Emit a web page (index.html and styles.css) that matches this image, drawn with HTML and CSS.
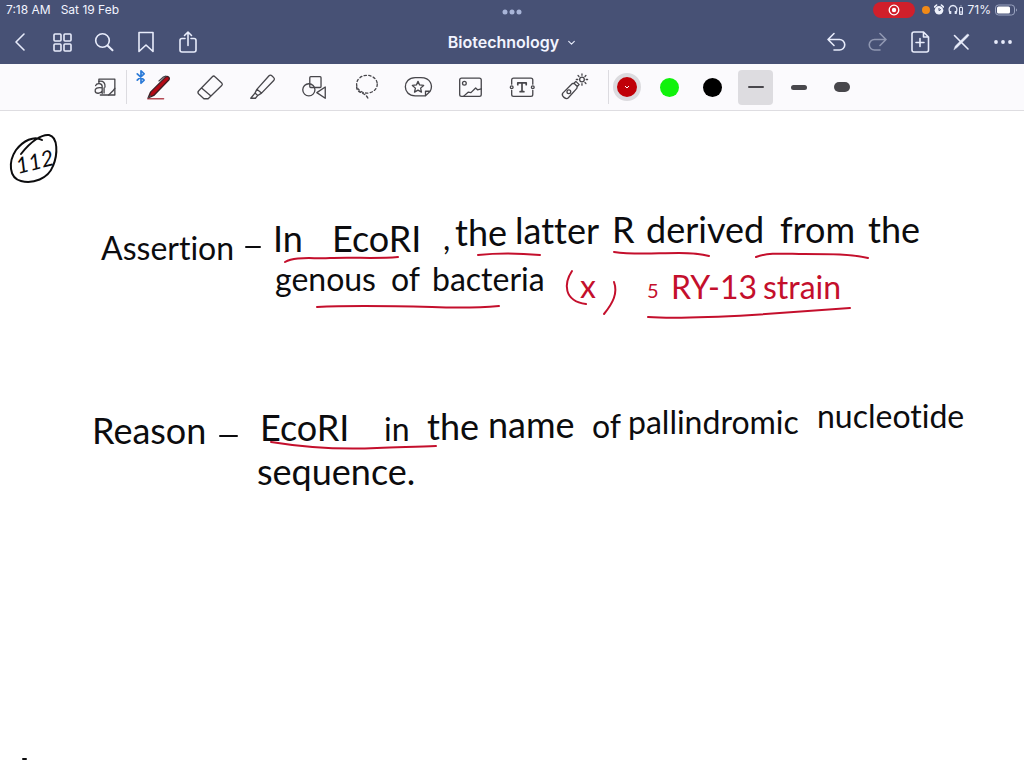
FILE: index.html
```
<!DOCTYPE html>
<html lang="en">

<head>
    <meta charset="UTF-8" />
    <meta name="viewport" content="width=device-width, initial-scale=1" />
    <title>Biotechnology</title>
    <link rel="stylesheet" href="styles.css">
</head>

<body>
    <header class="top">
        <div class="status">
            <div class="status-left">
                <span>7:18 AM</span>
                <span>Sat 19 Feb</span>
            </div>
            <svg class="multitask" width="22" height="6"><circle cx="4" cy="3" r="2.5"/><circle cx="11" cy="3" r="2.5"/><circle cx="18" cy="3" r="2.5"/></svg>
            <div class="status-right">
                <span class="record">
                    <svg width="12" height="12" viewBox="0 0 12 12"><circle cx="6" cy="6" r="4.8" fill="none" stroke="#fff" stroke-width="1.3"/><circle cx="6" cy="6" r="2.2" fill="#fff"/></svg>
                </span>
                <span class="mic-dot"></span>
                <svg width="10" height="12" viewBox="0 0 10 12"><circle cx="5" cy="6.3" r="4.3" fill="#eef1fb"/><path d="M.5 3 2.6 1M9.500 3 7.400 1" stroke="#eef1fb" stroke-width="1.6" stroke-linecap="round"/><path d="M5 4v2.600l2-1.200" fill="none" stroke="#475175"/></svg>
                <svg width="16" height="12" viewBox="0 0 16 12" fill="none" stroke="#e3e8f8"><path d="M2.500 9.500C-.5 5 2 1.500 5 1.500s5.500 3.500 2.500 8" stroke-width="1.300"/><path d="M2.300 7v3M7.700 7v3" stroke-width="2"/><path d="M11.500 3.500h3v7h-3zM12.500 2h1M13 7v3" stroke-width="1"/></svg>
                <span>71%</span>
                <svg width="23" height="12" viewBox="0 0 23 12"><rect x=".5" y="1" width="19" height="10" rx="3" fill="none" stroke="#9aa3c0"/><rect x="2" y="2.500" width="13" height="7" rx="1.500" fill="#fff"/><path d="M21 4.500c1.300.5 1.300 2.500 0 3z" fill="#9aa3c0"/></svg>
            </div>
        </div>
        <nav class="nav">
            <div class="nav-group">
                <button aria-label="Back"><svg viewBox="0 0 24 24"><path d="m15 4-8 8 8 8"/></svg></button>
                <button aria-label="Thumbnails"><svg viewBox="0 0 24 24"><rect x="3" y="4" width="7" height="7" rx="1"/><rect x="13" y="4" width="7" height="7" rx="1"/><rect x="3" y="14" width="7" height="7" rx="1"/><rect x="13" y="14" width="7" height="7" rx="1"/></svg></button>
                <button aria-label="Search"><svg viewBox="0 0 24 24"><circle cx="9.500" cy="10.500" r="6.800"/><path d="m14.500 15.500 5 4.800" stroke-width="2"/></svg></button>
                <button aria-label="Bookmark"><svg viewBox="0 0 24 24"><path d="M4 2.500h14v19l-7-6.500-7 6.500z"/></svg></button>
                <button aria-label="Share"><svg viewBox="0 0 24 24"><path d="M8 8.500H5a2 2 0 0 0-2 2V20a2 2 0 0 0 2 2h12a2 2 0 0 0 2-2v-9.500a2 2 0 0 0-2-2h-3M11 15.500V2M7.500 5.500 11 2l3.500 3.500"/></svg></button>
            </div>
            <button class="doc-title">Biotechnology <svg viewBox="0 0 8 8"><path d="m1.500 3 2.500 2.500L6.500 3"/></svg></button>
            <div class="nav-group nav-end">
                <button aria-label="Undo"><svg viewBox="0 0 24 24"><path d="M11 3.500 5 9.500l6 6M5 9.500h11.500a5 5 0 0 1 0 10.500H11"/></svg></button>
                <button aria-label="Redo" class="faded"><svg viewBox="0 0 24 24"><path d="m15 3.500 6 6-6 6M21 9.500H9.500A5 5 0 0 0 9.500 20H15"/></svg></button>
                <button aria-label="Add page"><svg viewBox="0 0 24 24"><path d="M7 2h9.500L21.500 7v13a2 2 0 0 1-2 2H7a2 2 0 0 1-2-2V4a2 2 0 0 1 2-2zM16.500 2v5h5M13 8.500v8M9 12.500h8"/></svg></button>
                <button aria-label="Stop editing"><svg viewBox="0 0 24 24"><path d="m5.500 5.500 13.500 13.500"/><path d="m5 19.500 1.300-3.500L18 4.500a1 1 0 0 1 1.500 1.500L8 17.500z" fill="#e8ecfb" stroke-width=".5"/></svg></button>
                <button aria-label="More"><svg viewBox="0 0 24 24" class="solid"><circle cx="5" cy="12" r="1.900"/><circle cx="12" cy="12" r="1.900"/><circle cx="19" cy="12" r="1.900"/></svg></button>
            </div>
        </nav>
    </header>

    <div class="tools">
        <button class="tool narrow" aria-label="Zoom window"><svg viewBox="0 0 32 32"><path d="M9.500 12V7.500h17v17H11"/><path d="M6 14.500c1-3 7-3 7 1v7.500M13 17c-5-1-8 .5-7.500 3.500s6 3 7.500-.5M15 17v5.500M9.500 10c5-1 7 2 6.500 6M20 24.500c1-1 5-4 6.500-7"/></svg></button>
        <span class="divider"></span>
        <button class="tool pen" aria-label="Pen">
            <svg viewBox="0 0 32 32"><path d="M5 28.500h17" stroke="#b54a55"/><path d="M5.500 27.500 8 21.500 24 5.500c2-2 5.500.5 3.500 3L11.500 25z" fill="#b40a16" stroke="#3a1d22"/><path d="m17 9.500 4.500-4 3-1M6 27l2-1.500"/></svg>
            <svg class="bluetooth" viewBox="0 0 8 12"><path d="M1 3.500 6.500 8.500 4 11V1l2.500 2.500L1 8.500"/></svg>
        </button>
        <button class="tool" aria-label="Eraser"><svg viewBox="0 0 32 32"><path d="m4 20 14.500-15a2 2 0 0 1 2.800 0l7.200 6.700a2 2 0 0 1 0 2.800L14 28.500H9.500L4 23.500a2.500 2.500 0 0 1 0-3.500zM7 17l10 8.500"/></svg></button>
        <button class="tool" aria-label="Highlighter"><svg viewBox="0 0 32 32"><path d="M10.500 18.500 23.500 4a2 2 0 0 1 3 0l2 2a2 2 0 0 1 0 3L15.500 22.500zM10.500 18.500l-2 4 3 2.500 4-2.500M8.500 22.500l-4.500 5.500h5l2.500-3"/></svg></button>
        <button class="tool" aria-label="Shapes"><svg viewBox="0 0 32 32"><rect x="11.500" y="5" width="12" height="11.500" rx="1"/><circle cx="10.500" cy="19" r="6.500"/><path d="m19 22 9-6v12z"/></svg></button>
        <button class="tool" aria-label="Lasso"><svg viewBox="0 0 32 32"><ellipse cx="17" cy="13" rx="11" ry="9.500" stroke-dasharray="2.500 2.500"/><path d="M6 16c0 7 9 5 12 12" stroke-dasharray="2.500 2.500"/></svg></button>
        <button class="tool" aria-label="Elements"><svg viewBox="0 0 32 32"><path d="M24 25.500H13C-1 25.500-1 6 13 6h6c11 0 13 9 10 14.500zM24 25.500v-5h5"/><path d="m16 10 1.700 3.800 4.300.5-3.200 2.900.9 4.300L16 19.400l-3.700 2.100.9-4.300-3.200-2.900 4.300-.5z"/></svg></button>
        <button class="tool" aria-label="Image"><svg viewBox="0 0 32 32"><rect x="5" y="6.500" width="23" height="19.500" rx="2"/><circle cx="10" cy="12" r="2"/><path d="m9 26 5-4.500 3 .5 5-5 2 2 4-1"/></svg></button>
        <button class="tool" aria-label="Text box"><svg viewBox="0 0 32 32"><path d="M5 13V8.500a2 2 0 0 1 2-2h18.500a2 2 0 0 1 2 2V13M5 19.500V24a2 2 0 0 0 2 2h18.500a2 2 0 0 0 2-2v-4.500"/><circle cx="5" cy="16.200" r="1.500"/><circle cx="27.500" cy="16.200" r="1.500"/><path d="M11.500 13.500v-2h9v2M16 11.500V21M14 21h4" stroke-width="1.800"/></svg></button>
        <button class="tool" aria-label="Laser pointer"><svg viewBox="0 0 32 32"><path d="m4 22.500 10-10 2-.5 3.500 3.500-.5 2L10 27.500c-2.500 2.500-8-2-6-5zM16 12l2-2 3.500 3.500-2 2"/><circle cx="10.500" cy="21" r="2"/><circle cx="24.500" cy="8" r="2.500"/><path d="M24.500 2v1.500M24.500 12.500V14M18.500 8H20M29 8h1.500M20.300 3.800l1 1M27.700 11.200l1 1M28.700 3.800l-1 1"/></svg></button>
        <span class="divider pens"></span>
        <button class="swatch red" aria-label="Red"><svg viewBox="0 0 8 8"><path d="m2 3 2 2 2-2"/></svg></button>
        <button class="swatch green" aria-label="Green"></button>
        <button class="swatch black" aria-label="Black"></button>
        <button class="stroke thin" aria-label="Thin stroke"></button>
        <button class="stroke medium" aria-label="Medium stroke"></button>
        <button class="stroke thick" aria-label="Thick stroke"></button>
    </div>

    <main class="page">
        <svg class="ink" viewBox="0 0 1024 657">
            <!-- question number -->
            <text x="18" y="63" class="number" transform="rotate(-14 18 63)">112</text>
            <path d="M21 43C31 30 42 23 49 24c9 2 9 19 4 31-5 13-20 18-32 15C9 67 8 51 16 39 23 30 34 24 42 29"/>

            <text x="101" y="149">Assertion</text>
            <path d="M246 136h14"/>
            <text x="273" y="141" class="large">In</text>
            <text x="332" y="141" class="large">EcoRI</text>
            <text x="443" y="139">,</text>
            <text x="455" y="135" class="large">the</text>
            <text x="515" y="133" class="large">latter</text>
            <text x="612" y="132" class="large">R</text>
            <text x="646" y="132" class="large">derived</text>
            <text x="780" y="132" class="large">from</text>
            <text x="868" y="132" class="large">the</text>
            <text x="275" y="180">genous</text>
            <text x="391" y="180">of</text>
            <text x="432" y="180">bacteria</text>

            <text x="92" y="333" class="large">Reason</text>
            <path d="M220 325h17"/>
            <text x="260" y="330" class="large">EcoRI</text>
            <text x="384" y="330">in</text>
            <text x="427" y="329" class="large">the</text>
            <text x="488" y="327" class="large">name</text>
            <text x="592" y="327">of</text>
            <text x="628" y="323">pallindromic</text>
            <text x="817" y="317">nucleotide</text>
            <text x="257" y="374" class="large">sequence.</text>
            <path d="M23 648h3"/>

            <!-- corrections -->
            <g class="correction">
                <text x="580" y="187">x</text>
                <path d="M572 160c-8 12-9 30 14 33M614 171c4 11-1 21-10 32"/>
                <text x="647" y="187" class="small">5</text>
                <text x="671" y="188">RY-13</text>
                <text x="763" y="188">strain</text>
                <path d="M285 151c10-6 28-3 45-4 24-1 45 1 68-1"/>
                <path d="M478 144q28-3 62 0"/>
                <path d="M614 141c20 3 42 1 65 1 11 0 19 0 30 3"/>
                <path d="M756 146c12-5 31-3 48-3 27 0 47 0 64 4"/>
                <path d="M317 196c34-2 79-1 115 0 26 1 44 1 67-1"/>
                <path d="M648 206c29 2 68 0 104-2 40-3 69-5 98-7"/>
                <path d="M271 331c31 5 64 8 106 6 27-1 42-1 59-2"/>
            </g>
        </svg>
    </main>
</body>

</html>
```
FILE: styles.css
```
body {
    margin: 0;
    min-height: 100vh;
    background-color: #fff;
    font-family: Inter, "Liberation Sans", sans-serif;
}

button {
    display: flex;
    align-items: center;
    justify-content: center;
    border: none;
    padding: 0;
    background: none;
    cursor: pointer;
}

.top {
    background-color: #475175;
    color: #f2f4ff;
}

.status {
    display: grid;
    grid-template-columns: 1fr auto 1fr;
    align-items: center;
    height: 20px;
    padding: 0 6px;
    font-size: 12px;
    line-height: 18px;
}

.status-left {
    display: flex;
    gap: 10px;
}

.multitask {
    fill: #a9b5d8;
    align-self: end;
    padding-bottom: 5px;
}

.status-right {
    display: flex;
    align-items: center;
    justify-content: flex-end;
    gap: 4px;
}

.record {
    display: flex;
    align-items: center;
    justify-content: center;
    width: 42px;
    height: 16px;
    border-radius: 8px;
    background-color: #d01f2b;
    margin-right: 3px;
}

.mic-dot {
    width: 8px;
    height: 8px;
    border-radius: 50%;
    background-color: #f18a17;
}

.nav {
    display: grid;
    grid-template-columns: 1fr auto 1fr;
    align-items: center;
    height: 44px;
}

.nav-group {
    display: flex;
}

.nav-end {
    justify-content: flex-end;
}

.nav-group button {
    width: 42px;
    height: 44px;
}

.nav svg {
    width: 24px;
    height: 24px;
    fill: none;
    stroke: #e8ecfb;
    stroke-width: 1.6;
    stroke-linecap: round;
    stroke-linejoin: round;
}

.nav .solid {
    fill: #e8ecfb;
    stroke: none;
}

.nav .faded {
    opacity: 0.45;
}

.doc-title {
    gap: 8px;
    color: #f2f4ff;
    font-family: inherit;
    font-size: 16px;
    font-weight: 600;
}

.nav .doc-title svg {
    width: 9px;
    height: 9px;
    stroke-width: 1;
}

.tools {
    display: flex;
    align-items: center;
    height: 46px;
    padding-left: 84px;
    background-color: #fbfafd;
    border-bottom: 1px solid #dedde1;
}

.tool {
    position: relative;
    width: 52px;
    height: 44px;
}

.tool svg {
    width: 30px;
    height: 30px;
    fill: none;
    stroke: #47464b;
    stroke-width: 1.4;
    stroke-linecap: round;
    stroke-linejoin: round;
}

.narrow {
    width: 42px;
}

.tool .bluetooth {
    position: absolute;
    top: 4px;
    left: 4px;
    width: 10px;
    height: 16px;
    stroke: #2d7bd8;
}

.divider {
    width: 1px;
    height: 34px;
    margin-right: 5px;
    background-color: #dcdbe0;
}

.pens {
    margin: 0 0 0 8px;
}

.swatch,
.stroke {
    width: 19px;
    height: 19px;
    margin: 0 12px;
    border-radius: 50%;
}

.red {
    margin: 0 7px 0 4px;
    border: 4px solid #dcdbdf;
    width: 28px;
    height: 28px;
    background-color: #c00008;
}

.red svg {
    width: 8px;
    height: 8px;
    fill: none;
    stroke: #fff;
}

.green {
    background-color: #10f20c;
}

.black {
    background-color: #000;
}

.stroke {
    width: 35px;
    height: 35px;
    margin: 0 4px;
    border-radius: 4px;
}

.stroke::before {
    content: "";
    width: 16px;
    height: 2px;
    border-radius: 5px;
    background-color: #48474c;
}

.thin {
    background-color: #dddce0;
}

.medium::before {
    height: 5px;
}

.thick::before {
    height: 10px;
}

.ink {
    display: block;
    width: 100%;
    font-family: Lato, "Liberation Sans", sans-serif;
    font-size: 32px;
    font-variant-ligatures: none;
}

.ink text {
    fill: #0c0c0e;
}

.ink path {
    fill: none;
    stroke: #0c0c0e;
    stroke-width: 2;
    stroke-linecap: round;
}

.ink .large {
    font-size: 36px;
}

.ink .number {
    font-size: 22px;
    font-style: italic;
}

.ink .correction text {
    fill: #c40f2c;
}

.ink .correction .small {
    font-size: 20px;
}

.ink .correction path {
    stroke: #c40f2c;
}
```
